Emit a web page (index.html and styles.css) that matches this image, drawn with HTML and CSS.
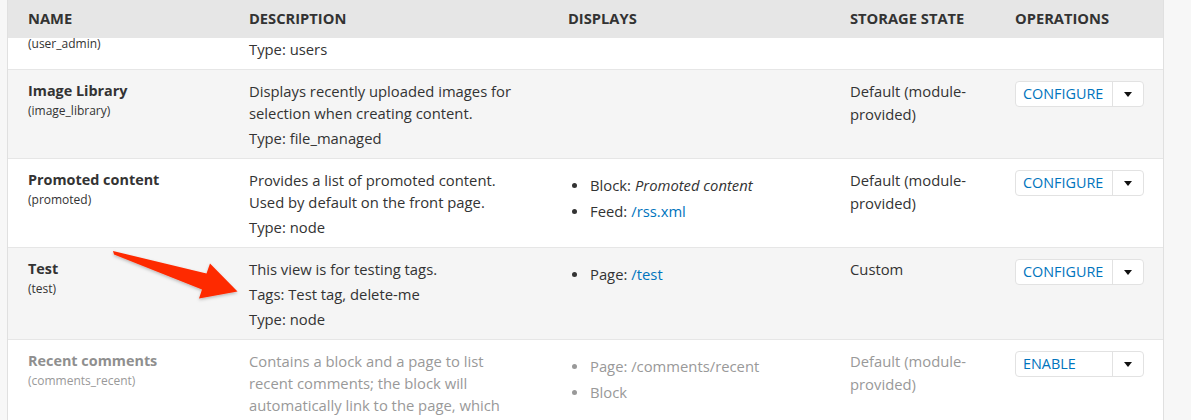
FILE: index.html
```html
<!DOCTYPE html>
<html lang="en">
<head>
<meta charset="utf-8">
<title>Views</title>
<link rel="stylesheet" href="styles.css">
</head>
<body>
<div class="frame">
  <table class="views">
    <colgroup>
      <col class="c-name"><col class="c-desc"><col class="c-disp"><col class="c-store"><col class="c-ops">
    </colgroup>
    <thead>
      <tr>
        <th>Name</th>
        <th>Description</th>
        <th>Displays</th>
        <th>Storage state</th>
        <th>Operations</th>
      </tr>
    </thead>
  </table>
  <div class="viewport">
    <table class="views body">
      <colgroup>
        <col class="c-name"><col class="c-desc"><col class="c-disp"><col class="c-store"><col class="c-ops">
      </colgroup>
      <tbody>
        <tr>
          <td class="name"><strong>People</strong><small>(user_admin)</small></td>
          <td class="desc"><p>Find and manage people.</p><p>Type: users</p></td>
          <td class="disp"></td>
          <td class="store"></td>
          <td class="ops"></td>
        </tr>
        <tr class="alt">
          <td class="name"><strong>Image Library</strong><small>(image_library)</small></td>
          <td class="desc"><p>Displays recently uploaded images for selection when creating content.</p><p>Type: file_managed</p></td>
          <td class="disp"></td>
          <td class="store">Default (module-provided)</td>
          <td class="ops"><div class="dropbutton"><span class="main">Configure</span><span class="toggle"><i class="caret"></i></span></div></td>
        </tr>
        <tr>
          <td class="name"><strong>Promoted content</strong><small>(promoted)</small></td>
          <td class="desc"><p>Provides a list of promoted content. Used by default on the front page.</p><p>Type: node</p></td>
          <td class="disp"><ul><li>Block: <em>Promoted content</em></li><li>Feed: <a href="#">/rss.xml</a></li></ul></td>
          <td class="store">Default (module-provided)</td>
          <td class="ops"><div class="dropbutton"><span class="main">Configure</span><span class="toggle"><i class="caret"></i></span></div></td>
        </tr>
        <tr class="alt">
          <td class="name"><strong>Test</strong><small>(test)</small></td>
          <td class="desc"><p>This view is for testing tags.</p><p>Tags: Test tag, delete-me</p><p>Type: node</p></td>
          <td class="disp"><ul><li>Page: <a href="#">/test</a></li></ul></td>
          <td class="store">Custom</td>
          <td class="ops"><div class="dropbutton"><span class="main">Configure</span><span class="toggle"><i class="caret"></i></span></div></td>
        </tr>
        <tr class="disabled">
          <td class="name"><strong>Recent comments</strong><small>(comments_recent)</small></td>
          <td class="desc"><p>Contains a block and a page to list recent comments; the block will automatically link to the page, which displays the comment as well as a link back to the node.</p><p>Type: comment</p></td>
          <td class="disp"><ul><li>Page: /comments/recent</li><li>Block</li></ul></td>
          <td class="store">Default (module-provided)</td>
          <td class="ops"><div class="dropbutton"><span class="main">Enable</span><span class="toggle"><i class="caret"></i></span></div></td>
        </tr>
      </tbody>
    </table>
  </div>
</div>
<svg class="arrow" width="1191" height="420" viewBox="0 0 1191 420" aria-hidden="true">
  <defs>
    <filter id="sh" x="-20%" y="-20%" width="140%" height="140%">
      <feDropShadow dx="0" dy="1.5" stdDeviation="1.5" flood-color="#000" flood-opacity="0.25"/>
    </filter>
  </defs>
  <polygon filter="url(#sh)" fill="#fe2a05" points="113,251 206.5,273.5 210,263.5 237.5,291.5 199,298.5 202,289.5 114,254.5"/>
</svg>
</body>
</html>
```

FILE: styles.css
```css
* { box-sizing: border-box; }

html, body {
  margin: 0;
  padding: 0;
  background: #f7f7f7;
  height: 420px;
  overflow: hidden;
}

body {
  font-family: "Open Sans", "Liberation Sans", sans-serif;
  font-size: 14.8px;
  color: #333;
}

.frame {
  margin-left: 7px;
  width: 1157px;
  height: 420px;
  border-left: 1px solid #e0e0e0;
  border-right: 1px solid #e0e0e0;
  background: #fff;
  display: flex;
  flex-direction: column;
}

.views {
  width: 1155px;
  table-layout: fixed;
  border-collapse: collapse;
  border-spacing: 0;
}

.c-name { width: 221px; }
.c-desc { width: 319px; }
.c-disp { width: 282px; }
.c-store { width: 165px; }
.c-ops { width: 168px; }

.views th {
  background: #e6e6e6;
  text-align: left;
  font-weight: 700;
  font-size: 14.7px;
  text-transform: uppercase;
  line-height: 18px;
  padding: 9px 20px 11px;
  color: #333;
}

.viewport {
  flex: 1;
  overflow: hidden;
}

.views.body {
  margin-top: -35px;
}

.views td {
  vertical-align: top;
  padding: 10px 20px 9px;
  border-bottom: 1px solid #e6e6e6;
}

.views tr.alt td { background: #f5f5f5; }

.name strong {
  display: block;
  font-weight: 700;
  font-size: 14.4px;
  line-height: 22px;
}

.name small {
  display: block;
  font-size: 12px;
  line-height: 18px;
}

.desc { padding-right: 27px; }

.desc p {
  margin: 0;
  line-height: 22px;
}

.desc p + p { margin-top: 3px; }

.disp ul {
  list-style: none;
  margin: 3px 0 0;
  padding: 0;
}

.disp li {
  display: flex;
  align-items: center;
  line-height: 20px;
  padding: 3px 0;
  white-space: nowrap;
}

.disp li::before {
  content: "";
  width: 5px;
  height: 5px;
  border-radius: 50%;
  background: currentColor;
  margin: 0 13px 0 4px;
  flex: none;
}

.disp em { font-style: italic; margin-left: 4px; }

.disp a { margin-left: 4px; }

a {
  color: #0074bd;
  text-decoration: none;
}

.store {
  padding-top: 12px;
  line-height: 23px;
}

.dropbutton {
  margin-top: 1px;
  display: flex;
  width: 129px;
  height: 26px;
  border: 1px solid #e2e2e2;
  border-radius: 4px;
  background: #fff;
}

.dropbutton .main {
  width: 97px;
  padding-left: 7px;
  font-size: 14.4px;
  line-height: 24px;
  color: #0074bd;
  text-transform: uppercase;
  border-right: 1px solid #e2e2e2;
}

.dropbutton .toggle {
  flex: 1;
  display: flex;
  align-items: center;
  justify-content: center;
}

.caret {
  width: 0;
  height: 0;
  border-left: 4.5px solid transparent;
  border-right: 4.5px solid transparent;
  border-top: 5px solid #111;
}

tr.disabled td { color: #999; }
tr.disabled .name strong { color: #8f8f8f; }

.arrow {
  position: absolute;
  left: 0;
  top: 0;
  pointer-events: none;
}
```
